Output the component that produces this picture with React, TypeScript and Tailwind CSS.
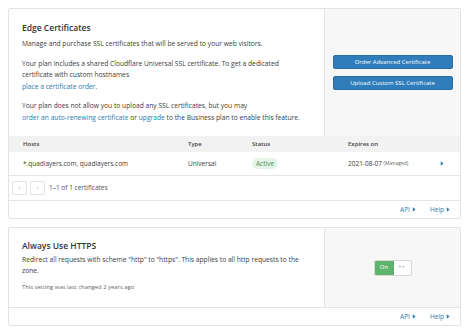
import type { ReactNode } from 'react'

const FONT = { fontFamily: '"Open Sans", "Noto Sans", sans-serif' }

function Caret({ className = '' }: { className?: string }) {
  return (
    <svg viewBox="0 0 6 8" className={`inline-block w-[4px] h-[5px] ${className}`} fill="currentColor">
      <path d="M1 0.5 L5.5 4 L1 7.5 Z" />
    </svg>
  )
}

function Link({ children }: { children: ReactNode }) {
  return <a className="text-[#2c7cb0] cursor-pointer">{children}</a>
}

function CardFooter() {
  return (
    <div className="h-[18px] flex items-center justify-end gap-[14px] pr-[10px] text-[6.5px] text-[#2c7cb0] border-t border-[#e6e6e6]">
      <span className="flex items-center gap-[2px]">API <Caret /></span>
      <span className="flex items-center gap-[2px]">Help <Caret /></span>
    </div>
  )
}

function Button({ children }: { children: ReactNode }) {
  return (
    <button className="w-[120px] h-[14px] rounded-[2px] bg-[#2f7dbb] border border-[#2a6ea6] text-white text-[6px] leading-none">
      {children}
    </button>
  )
}

export default function App() {
  return (
    <div className="w-[474px] h-[332px] bg-white pt-[8px] pl-[8px] text-[#3a3d3e]" style={FONT}>
      {/* Edge certificates */}
      <div className="w-[453px] border border-[#e3e3e3] rounded-[2px] bg-white">
        <div className="flex h-[127px]">
          <div className="flex-1 pl-[13px] pt-[12px] text-[6.7px] leading-[11.5px]">
            <h2 className="text-[8.5px] font-semibold leading-[13px] text-[#333]">Edge Certificates</h2>
            <p className="mt-[4px]">Manage and purchase SSL certificates that will be served to your web visitors.</p>
            <p className="mt-[8px]">
              Your plan includes a shared Cloudflare Universal SSL certificate. To get a dedicated
              <br />
              certificate with custom hostnames
              <br />
              <Link>place a certificate order</Link>.
            </p>
            <p className="mt-[8px]">
              Your plan does not allow you to upload any SSL certificates, but you may
              <br />
              <Link>order an auto-renewing certificate</Link> or <Link>upgrade</Link> to the Business plan to enable this feature.
            </p>
          </div>
          <div className="w-[136px] bg-[#f7f7f8] border-l border-[#e6e6e6] flex flex-col items-center justify-center gap-[7px]">
            <Button>Order Advanced Certificate</Button>
            <Button>Upload Custom SSL Certificate</Button>
          </div>
        </div>

        <div className="grid grid-cols-[165px_64px_96px_1fr_20px] items-center h-[16px] bg-[#f2f2f2] pl-[14px] text-[6px] font-semibold text-[#444]">
          <span>Hosts</span>
          <span>Type</span>
          <span>Status</span>
          <span>Expires on</span>
          <span />
        </div>
        <div className="grid grid-cols-[165px_64px_96px_1fr_20px] items-center h-[24px] pl-[14px] text-[6.5px] border-b border-[#e6e6e6]">
          <span>*.quadlayers.com, quadlayers.com</span>
          <span>Universal</span>
          <span>
            <span className="inline-block px-[4px] rounded-full bg-[#e4f4e6] text-[#4f8f56] text-[6.5px] leading-[11px]">Active</span>
          </span>
          <span>
            2021-08-07 <sup className="text-[5px] text-[#666] relative -top-[1px]">(Managed)</sup>
          </span>
          <span className="text-[#2c7cb0]"><Caret /></span>
        </div>
        <div className="h-[24px] flex items-center pl-[3px] gap-[3px] text-[6.5px] text-[#555]">
          <span className="w-[15px] h-[14px] border border-[#e3e3e3] rounded-[2px] flex items-center justify-center text-[#bbb] text-[7px]">‹</span>
          <span className="w-[15px] h-[14px] border border-[#e3e3e3] rounded-[2px] flex items-center justify-center text-[#bbb] text-[7px]">›</span>
          <span className="ml-[1px]">1–1 of 1 certificates</span>
        </div>
        <CardFooter />
      </div>

      {/* Always use HTTPS */}
      <div className="mt-[8px] w-[453px] border border-[#e3e3e3] rounded-[2px] bg-white">
        <div className="flex h-[79px]">
          <div className="flex-1 pl-[13px] pr-[10px] pt-[11px] text-[6.7px] leading-[11px]">
            <h2 className="text-[8.5px] font-semibold leading-[13px] text-[#333]">Always Use HTTPS</h2>
            <p className="mt-[2px]">Redirect all requests with scheme "http" to "https". This applies to all http requests to the zone.</p>
            <p className="mt-[6px] text-[5.9px] text-[#666]">This setting was last changed 2 years ago</p>
          </div>
          <div className="w-[136px] bg-[#f7f7f8] border-l border-[#e6e6e6] flex items-center justify-center">
            <div className="flex h-[16px] border border-[#d9d9d9] rounded-[2px] overflow-hidden text-[6px]">
              <span className="w-[19px] bg-[#5fb46d] text-white flex items-center justify-center">On</span>
              <span className="w-[17px] bg-white text-[#888] flex items-center justify-center tracking-[1px]">••</span>
            </div>
          </div>
        </div>
        <CardFooter />
      </div>
    </div>
  )
}
